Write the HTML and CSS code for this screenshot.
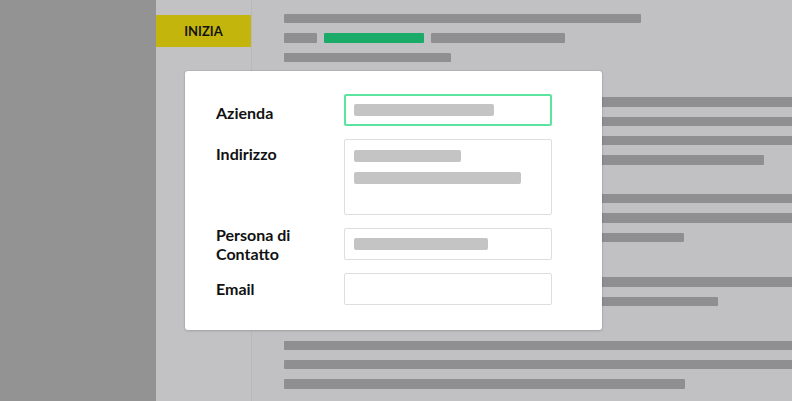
FILE: index.html
```html
<!DOCTYPE html>
<html lang="it">
<head>
<meta charset="utf-8">
<title>Form</title>
<link rel="stylesheet" href="styles.css">
</head>
<body>
<div class="app">
  <aside class="sidebar"></aside>
  <nav class="nav">
    <div class="start-btn">INIZIA</div>
  </nav>
  <main class="main">
    <section class="group group--a">
      <div class="bar w357"></div>
      <div class="bar-row">
        <div class="bar w33"></div>
        <div class="bar bar--green w100"></div>
        <div class="bar w134"></div>
      </div>
      <div class="bar w167"></div>
    </section>
    <section class="group group--b">
      <div class="bar wfull"></div>
      <div class="bar wfull"></div>
      <div class="bar wfull"></div>
      <div class="bar w480"></div>
    </section>
    <section class="group group--c">
      <div class="bar wfull"></div>
      <div class="bar wfull"></div>
      <div class="bar w400"></div>
    </section>
    <section class="group group--d">
      <div class="bar wfull"></div>
      <div class="bar w434"></div>
    </section>
    <section class="group group--e">
      <div class="bar wfull"></div>
      <div class="bar wfull"></div>
      <div class="bar w401"></div>
    </section>
  </main>
</div>

<div class="modal">
  <div class="form">
    <div class="label label--low">Azienda</div>
    <div class="field field--active"><span class="ph w140"></span></div>

    <div class="label label--top">Indirizzo</div>
    <div class="field field--area">
      <span class="ph w107"></span>
      <span class="ph w167p"></span>
    </div>

    <div class="label">Persona di<br>Contatto</div>
    <div class="field"><span class="ph w134p"></span></div>

    <div class="label">Email</div>
    <div class="field"></div>
  </div>
</div>
</body>
</html>
```

FILE: styles.css
```css
* { box-sizing: border-box; }

html, body {
  margin: 0;
  padding: 0;
  width: 792px;
  height: 401px;
  overflow: hidden;
  background: #c1c1c3;
  font-family: "Lato", "Noto Sans", sans-serif;
}

.app {
  display: flex;
  height: 401px;
}

.sidebar {
  width: 156px;
  flex: none;
  background: #939393;
}

.nav {
  width: 96px;
  flex: none;
  background: #c2c2c4;
  border-right: 1px solid #b9b9bb;
  padding-top: 15px;
}

.start-btn {
  height: 32px;
  background: #c4b50c;
  color: #141410;
  font-weight: 700;
  font-size: 13px;
  display: flex;
  align-items: center;
  justify-content: center;
}

.main {
  flex: 1;
  overflow: hidden;
  padding: 14px 0 0 32px;
}

.group {
  display: flex;
  flex-direction: column;
  gap: 10px;
}
.group--b { margin-top: 35px; }
.group--c { margin-top: 29px; }
.group--d { margin-top: 35.3px; }
.group--e { margin-top: 34.7px; }

.bar {
  height: 9.4px;
  background: #8f8f91;
  border-radius: 1px;
  flex: none;
}
.bar--green { background: #1aab69; }

.bar-row {
  display: flex;
  gap: 7px;
}

.w33 { width: 33px; }
.w100 { width: 100px; }
.w134 { width: 134px; }
.w167 { width: 167px; }
.w357 { width: 357px; }
.w400 { width: 400px; }
.w401 { width: 401px; }
.w434 { width: 434px; }
.w480 { width: 480px; }
.wfull { width: 540px; }

/* Modal overlay */
.modal {
  position: absolute;
  left: 185px;
  top: 71px;
  width: 417px;
  height: 259px;
  background: #ffffff;
  border-radius: 3px;
  box-shadow: 0 0 0 1px rgba(0, 0, 0, 0.05), 0 1px 3px rgba(0, 0, 0, 0.12);
  padding: 23px 50px 25px 31px;
}

.form {
  display: grid;
  grid-template-columns: 128px 208px;
  grid-template-rows: 32px 76px 32px 32px;
  row-gap: 13px;
  align-items: center;
}

.label {
  font-size: 16px;
  line-height: 19.5px;
  font-weight: 700;
  color: #111111;
}
.label--low { padding-top: 6px; }
.label--top { align-self: start; padding-top: 5px; }

.field {
  height: 100%;
  border: 1px solid #dedede;
  border-radius: 2px;
  padding: 9px 0 0 9px;
  display: flex;
  flex-direction: column;
  gap: 10px;
}
.field--active {
  border: 2px solid #5ae5a0;
  padding: 8px 0 0 8px;
}
.field--area {
  padding-top: 10px;
}

.ph {
  display: block;
  height: 12px;
  background: #c4c4c4;
  border-radius: 2px;
}
.w140 { width: 140px; }
.w107 { width: 107px; }
.w167p { width: 167px; }
.w134p { width: 134px; }
```
